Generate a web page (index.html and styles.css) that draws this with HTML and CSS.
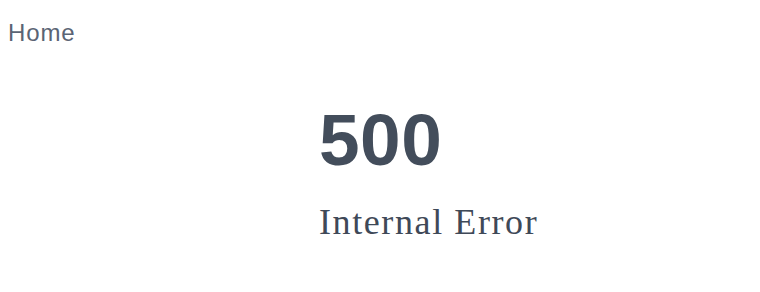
FILE: index.html
```html
<!DOCTYPE html>
<html>
<head>
<meta charset="utf-8">
<link rel="stylesheet" href="styles.css">
</head>
<body>
<nav class="nav"><a class="home" href="#">Home</a></nav>
<main class="error">
  <h1 class="code">500</h1>
  <p class="message">Internal Error</p>
</main>
</body>
</html>
```
FILE: styles.css
```css
html, body { margin: 0; padding: 0; background: #ffffff; }
body { width: 760px; height: 292px; overflow: hidden; }
.nav { padding: 19px 8px 0; height: 28px; }
.home {
  font-family: "Liberation Sans", Arial, sans-serif;
  font-size: 24px;
  line-height: 28px;
  letter-spacing: 0.9px;
  color: #5a6474;
  text-decoration: none;
}
.error {
  display: flex;
  flex-direction: column;
  align-items: flex-start;
  padding-left: 319px;
  padding-top: 53px;
}
.code {
  margin: 0;
  font-family: "Liberation Sans", Arial, sans-serif;
  font-weight: 700;
  font-size: 73px;
  line-height: 80px;
  letter-spacing: 0.5px;
  color: #434d5b;
}
.message {
  margin: 20px 0 0;
  font-family: "Liberation Serif", "Times New Roman", serif;
  font-size: 36px;
  line-height: 44px;
  letter-spacing: 1.6px;
  color: #3f4958;
  white-space: nowrap;
}
```
